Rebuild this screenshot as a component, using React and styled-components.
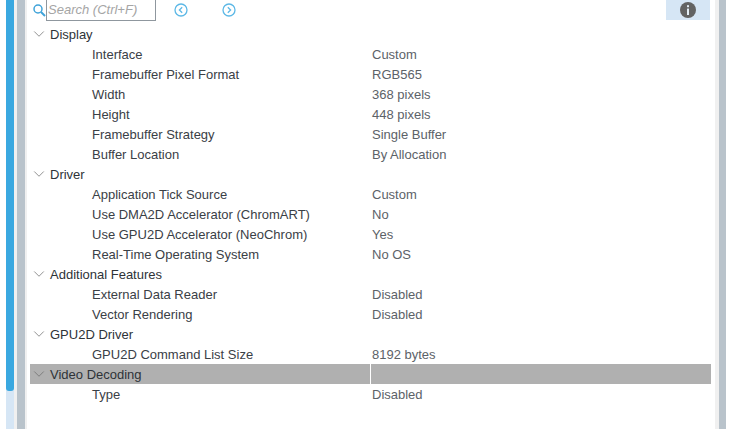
import React from "react";
import styled, { createGlobalStyle } from "styled-components";
import { ChevronDown } from "lucide-react";

const GlobalStyle = createGlobalStyle`
  html, body {
    margin: 0;
    padding: 0;
    background: #fff;
    overflow: hidden;
  }
`;

const groups = [
  {
    name: "Display",
    rows: [
      ["Interface", "Custom"],
      ["Framebuffer Pixel Format", "RGB565"],
      ["Width", "368 pixels"],
      ["Height", "448 pixels"],
      ["Framebuffer Strategy", "Single Buffer"],
      ["Buffer Location", "By Allocation"],
    ],
  },
  {
    name: "Driver",
    rows: [
      ["Application Tick Source", "Custom"],
      ["Use DMA2D Accelerator (ChromART)", "No"],
      ["Use GPU2D Accelerator (NeoChrom)", "Yes"],
      ["Real-Time Operating System", "No OS"],
    ],
  },
  {
    name: "Additional Features",
    rows: [
      ["External Data Reader", "Disabled"],
      ["Vector Rendering", "Disabled"],
    ],
  },
  {
    name: "GPU2D Driver",
    rows: [["GPU2D Command List Size", "8192 bytes"]],
  },
  {
    name: "Video Decoding",
    selected: true,
    rows: [["Type", "Disabled"]],
  },
];

const SearchIcon = () => (
  <svg width="13" height="13" viewBox="0 0 13 13" fill="none" stroke="#3fa3d9" strokeWidth="1.5">
    <circle cx="5" cy="5" r="4" />
    <path d="M8 8 L12 12" strokeWidth="2" />
  </svg>
);

const NavIcon = ({ next }) => (
  <svg width="14" height="14" viewBox="0 0 14 14" fill="none" stroke="#5cb8e6" strokeWidth="1.3">
    <circle cx="7" cy="7" r="6" />
    <path d={next ? "M5.8 4.2 L8.6 7 L5.8 9.8" : "M8.2 4.2 L5.4 7 L8.2 9.8"} />
  </svg>
);

const InfoIcon = () => (
  <svg width="16" height="16" viewBox="0 0 16 16">
    <circle cx="8" cy="8" r="8" fill="#636363" />
    <rect x="7" y="6.6" width="2" height="6.4" fill="#e4eef6" />
    <rect x="7" y="3.2" width="2" height="2" fill="#e4eef6" />
  </svg>
);

const App = () => {
  return (
    <>
      <GlobalStyle />
      <Page>
        <ScrollTrack>
          <ScrollThumb />
        </ScrollTrack>
        <LeftGutter>
          <Divider />
        </LeftGutter>
        <Panel>
          <Toolbar>
            <SearchIcon />
            <SearchBox>Search (Ctrl+F)</SearchBox>
            <NavButton>
              <NavIcon />
            </NavButton>
            <NavButton $next>
              <NavIcon next />
            </NavButton>
            <InfoButton>
              <InfoIcon />
            </InfoButton>
          </Toolbar>
          <Table>
            {groups.map((group) => (
              <React.Fragment key={group.name}>
                <GroupRow $selected={group.selected}>
                  <Chevron>
                    <ChevronDown size={18} strokeWidth={1} />
                  </Chevron>
                  <GroupName>{group.name}</GroupName>
                  {group.selected && <CellGap />}
                </GroupRow>
                {group.rows.map(([label, value]) => (
                  <Row key={label}>
                    <Label>{label}</Label>
                    <Value>{value}</Value>
                  </Row>
                ))}
              </React.Fragment>
            ))}
          </Table>
        </Panel>
        <RightGutter>
          <Divider />
        </RightGutter>
      </Page>
    </>
  );
};

export default App;

const Page = styled.div`
  display: flex;
  width: 750px;
  height: 429px;
  padding-left: 6px;
  box-sizing: border-box;
  background: #fff;
  font-family: "Liberation Sans", Arial, sans-serif;
  font-size: 13px;
  overflow: hidden;
`;
const ScrollTrack = styled.div`
  width: 8px;
  height: 429px;
  background: #d6e6f5;
`;
const ScrollThumb = styled.div`
  height: 391px;
  background: #3aa8e0;
  border-radius: 0 0 3px 3px;
`;
const LeftGutter = styled.div`
  display: flex;
  width: 13px;
  height: 429px;
  padding-left: 3px;
  box-sizing: border-box;
  background: #f0f0f0;
`;
const RightGutter = styled.div`
  display: flex;
  width: 11px;
  height: 429px;
  margin-left: 4px;
  padding-left: 4px;
  box-sizing: border-box;
  background: #f0f0f0;
`;
const Divider = styled.div`
  width: 8px;
  height: 429px;
  background: #b9c3cb;
`;
const Panel = styled.div`
  width: 681px;
  margin-left: 3px;
`;
const Toolbar = styled.div`
  display: flex;
  align-items: center;
  height: 20px;
  padding-left: 3px;
  margin-bottom: 4px;
`;
const SearchBox = styled.div`
  align-self: flex-start;
  width: 110px;
  height: 21px;
  padding-left: 1px;
  box-sizing: border-box;
  border: 1px solid #8f979e;
  border-top: 0;
  line-height: 20px;
  font-style: italic;
  font-size: 13px;
  color: #a5a5a5;
`;
const NavButton = styled.div`
  display: flex;
  margin-left: ${(props) => (props.$next ? "34px" : "18px")};
`;
const InfoButton = styled.div`
  display: flex;
  align-items: center;
  justify-content: center;
  width: 44px;
  height: 20px;
  margin-left: auto;
  margin-right: 1px;
  background: #d6e6f5;
`;
const Table = styled.div`
  display: flex;
  flex-direction: column;
`;
const GroupRow = styled.div`
  position: relative;
  display: flex;
  align-items: center;
  height: 20px;
  background: ${(props) => (props.$selected ? "#b0b0b0" : "transparent")};
`;
const Chevron = styled.span`
  display: flex;
  width: 20px;
  color: #6e6e6e;
`;
const GroupName = styled.span`
  color: #2e3338;
`;
const CellGap = styled.span`
  position: absolute;
  left: 340px;
  top: 0;
  bottom: 0;
  width: 1px;
  background: #fff;
`;
const Row = styled.div`
  display: flex;
  align-items: center;
  height: 20px;
`;
const Label = styled.span`
  width: 342px;
  padding-left: 62px;
  box-sizing: border-box;
  color: #3a4046;
`;
const Value = styled.span`
  color: #5c6268;
`;
